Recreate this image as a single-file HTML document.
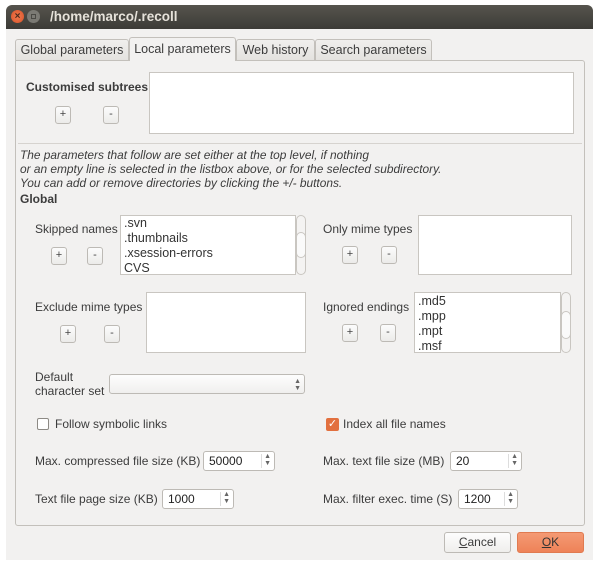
<!DOCTYPE html>
<html><head><style>
*{box-sizing:border-box;margin:0;padding:0}
body{width:600px;height:567px;background:#fff;position:relative;overflow:hidden;font-family:"Liberation Sans",sans-serif;font-size:12px;color:#3c3c3c}
.a{position:absolute}
.win{left:6px;top:5px;width:587px;height:555px;background:#f2f1f0;border-radius:6px 6px 0 0}
.title{left:6px;top:5px;width:587px;height:24px;background:linear-gradient(#56544d,#3c3b37);border-radius:6px 6px 0 0}
.tab{top:39px;height:21px;border:1px solid #c3c0bb;border-bottom:none;background:linear-gradient(#f0efed,#e4e2df);border-radius:3px 3px 0 0;text-align:center;line-height:20px;font-size:12.5px;color:#3c3c3c}
.pane{left:15px;top:60px;width:570px;height:466px;border:1px solid #c3c0bb;border-radius:0 3px 3px 3px;background:#f2f1f0}
.lb{background:#fff;border:1px solid #c9c6c1}
.btn{width:16px;height:18px;border:1px solid #bdbab5;border-radius:3px;background:linear-gradient(#fcfcfc,#ecebe9);text-align:center;line-height:15px;font-size:11px;color:#444}
.l{white-space:nowrap;font-size:12px}
.li{position:absolute;left:3px;line-height:15px;font-size:12.5px;color:#333}
.sb{width:10px;border:1px solid #c9c6c1;border-radius:5px;background:#f4f3f2}
.spin{height:20px;background:#fff;border:1px solid #bdbab5;border-radius:3px;padding-left:5px;line-height:18px;font-size:12px;color:#222}
.spin:after{content:"";position:absolute;right:12px;top:2px;height:14px;border-left:1px solid #ddd}
.arr{position:absolute;right:3px;top:1px;font-size:7px;line-height:7px;color:#666}
</style></head><body>
<div class="a win"></div>
<div class="a title"></div>
<div class="a" style="left:11px;top:10px;width:13px;height:13px;border-radius:50%;background:radial-gradient(#f07a4e,#d9532a);color:#4a2a1c;font-size:10px;line-height:13px;text-align:center;font-weight:bold">×</div>
<div class="a" style="left:27px;top:10px;width:13px;height:13px;border-radius:50%;background:#7b7a74"></div>
<div class="a" style="left:31px;top:14px;width:5px;height:5px;border:1px solid #4a4944"></div>
<div class="a l" style="left:50px;top:9px;font-weight:bold;font-size:13.5px;color:#e6e2da">/home/marco/.recoll</div>

<div class="a tab" style="left:15px;width:114px">Global parameters</div>
<div class="a tab" style="left:236px;width:79px">Web history</div>
<div class="a tab" style="left:315px;width:117px">Search parameters</div>
<div class="a pane"></div>
<div class="a tab" style="left:129px;top:37px;width:107px;height:24px;background:#f2f1f0;z-index:2;line-height:22px">Local parameters</div>

<div class="a l" style="left:26px;top:80px;font-weight:bold">Customised subtrees</div>
<div class="a lb" style="left:149px;top:72px;width:425px;height:62px"></div>
<div class="a btn" style="left:55px;top:106px">+</div>
<div class="a btn" style="left:103px;top:106px">-</div>
<div class="a" style="left:18px;top:143px;width:564px;height:1px;background:#d6d3cf"></div>
<div class="a" style="left:20px;top:148px;font-style:italic;line-height:14px;font-size:11.9px;color:#3c3c3c;white-space:nowrap">The parameters that follow are set either at the top level, if nothing<br>or an empty line is selected in the listbox above, or for the selected subdirectory.<br>You can add or remove directories by clicking the +/- buttons.</div>
<div class="a l" style="left:20px;top:192px;font-weight:bold">Global</div>

<div class="a l" style="left:35px;top:222px">Skipped names</div>
<div class="a lb" style="left:120px;top:215px;width:176px;height:60px;overflow:hidden">
<div class="li" style="top:0">.svn</div><div class="li" style="top:15px">.thumbnails</div><div class="li" style="top:30px">.xsession-errors</div><div class="li" style="top:45px">CVS</div></div>
<div class="a sb" style="left:296px;top:215px;height:60px"></div>
<div class="a sb" style="left:296px;top:232px;height:26px;background:#fafafa"></div>
<div class="a btn" style="left:51px;top:247px">+</div>
<div class="a btn" style="left:87px;top:247px">-</div>

<div class="a l" style="left:323px;top:222px">Only mime types</div>
<div class="a lb" style="left:418px;top:215px;width:154px;height:60px"></div>
<div class="a btn" style="left:342px;top:246px">+</div>
<div class="a btn" style="left:381px;top:246px">-</div>

<div class="a l" style="left:35px;top:300px">Exclude mime types</div>
<div class="a lb" style="left:146px;top:292px;width:160px;height:61px"></div>
<div class="a btn" style="left:60px;top:325px">+</div>
<div class="a btn" style="left:104px;top:325px">-</div>

<div class="a l" style="left:323px;top:300px">Ignored endings</div>
<div class="a lb" style="left:414px;top:292px;width:147px;height:61px;overflow:hidden">
<div class="li" style="top:1px">.md5</div><div class="li" style="top:16px">.mpp</div><div class="li" style="top:31px">.mpt</div><div class="li" style="top:46px">.msf</div></div>
<div class="a sb" style="left:561px;top:292px;height:61px"></div>
<div class="a sb" style="left:561px;top:311px;height:28px;background:#fafafa"></div>
<div class="a btn" style="left:342px;top:324px">+</div>
<div class="a btn" style="left:380px;top:324px">-</div>

<div class="a l" style="left:35px;top:370px;line-height:14px">Default<br>character set</div>
<div class="a" style="left:109px;top:374px;width:196px;height:20px;border:1px solid #bdbab5;border-radius:3px;background:linear-gradient(#fdfdfd,#f0efee)"><span class="arr" style="top:3px">▲<br>▼</span></div>

<div class="a" style="left:37px;top:418px;width:12px;height:12px;border:1px solid #8d8a85;border-radius:2px;background:#fff"></div>
<div class="a l" style="left:55px;top:417px">Follow symbolic links</div>
<div class="a" style="left:326px;top:418px;width:13px;height:13px;border-radius:2px;background:#e2703f;color:#fff;font-size:11px;line-height:13px;text-align:center">✓</div>
<div class="a l" style="left:343px;top:417px">Index all file names</div>

<div class="a l" style="left:35px;top:454px">Max. compressed file size (KB)</div>
<div class="a spin" style="left:203px;top:451px;width:72px">50000<span class="arr">▲<br>▼</span></div>
<div class="a l" style="left:35px;top:492px">Text file page size (KB)</div>
<div class="a spin" style="left:162px;top:489px;width:72px">1000<span class="arr">▲<br>▼</span></div>
<div class="a l" style="left:323px;top:454px">Max. text file size (MB)</div>
<div class="a spin" style="left:450px;top:451px;width:72px">20<span class="arr">▲<br>▼</span></div>
<div class="a l" style="left:323px;top:492px">Max. filter exec. time (S)</div>
<div class="a spin" style="left:458px;top:489px;width:60px">1200<span class="arr">▲<br>▼</span></div>

<div class="a" style="left:444px;top:532px;width:67px;height:21px;border:1px solid #bdbab5;border-radius:3px;background:linear-gradient(#fdfdfd,#efeeec);text-align:center;line-height:19px"><u>C</u>ancel</div>
<div class="a" style="left:517px;top:532px;width:67px;height:21px;border:1px solid #e07a50;border-radius:3px;background:linear-gradient(#f49a74,#ee8258);text-align:center;line-height:19px;color:#333"><u>O</u>K</div>
</body></html>
